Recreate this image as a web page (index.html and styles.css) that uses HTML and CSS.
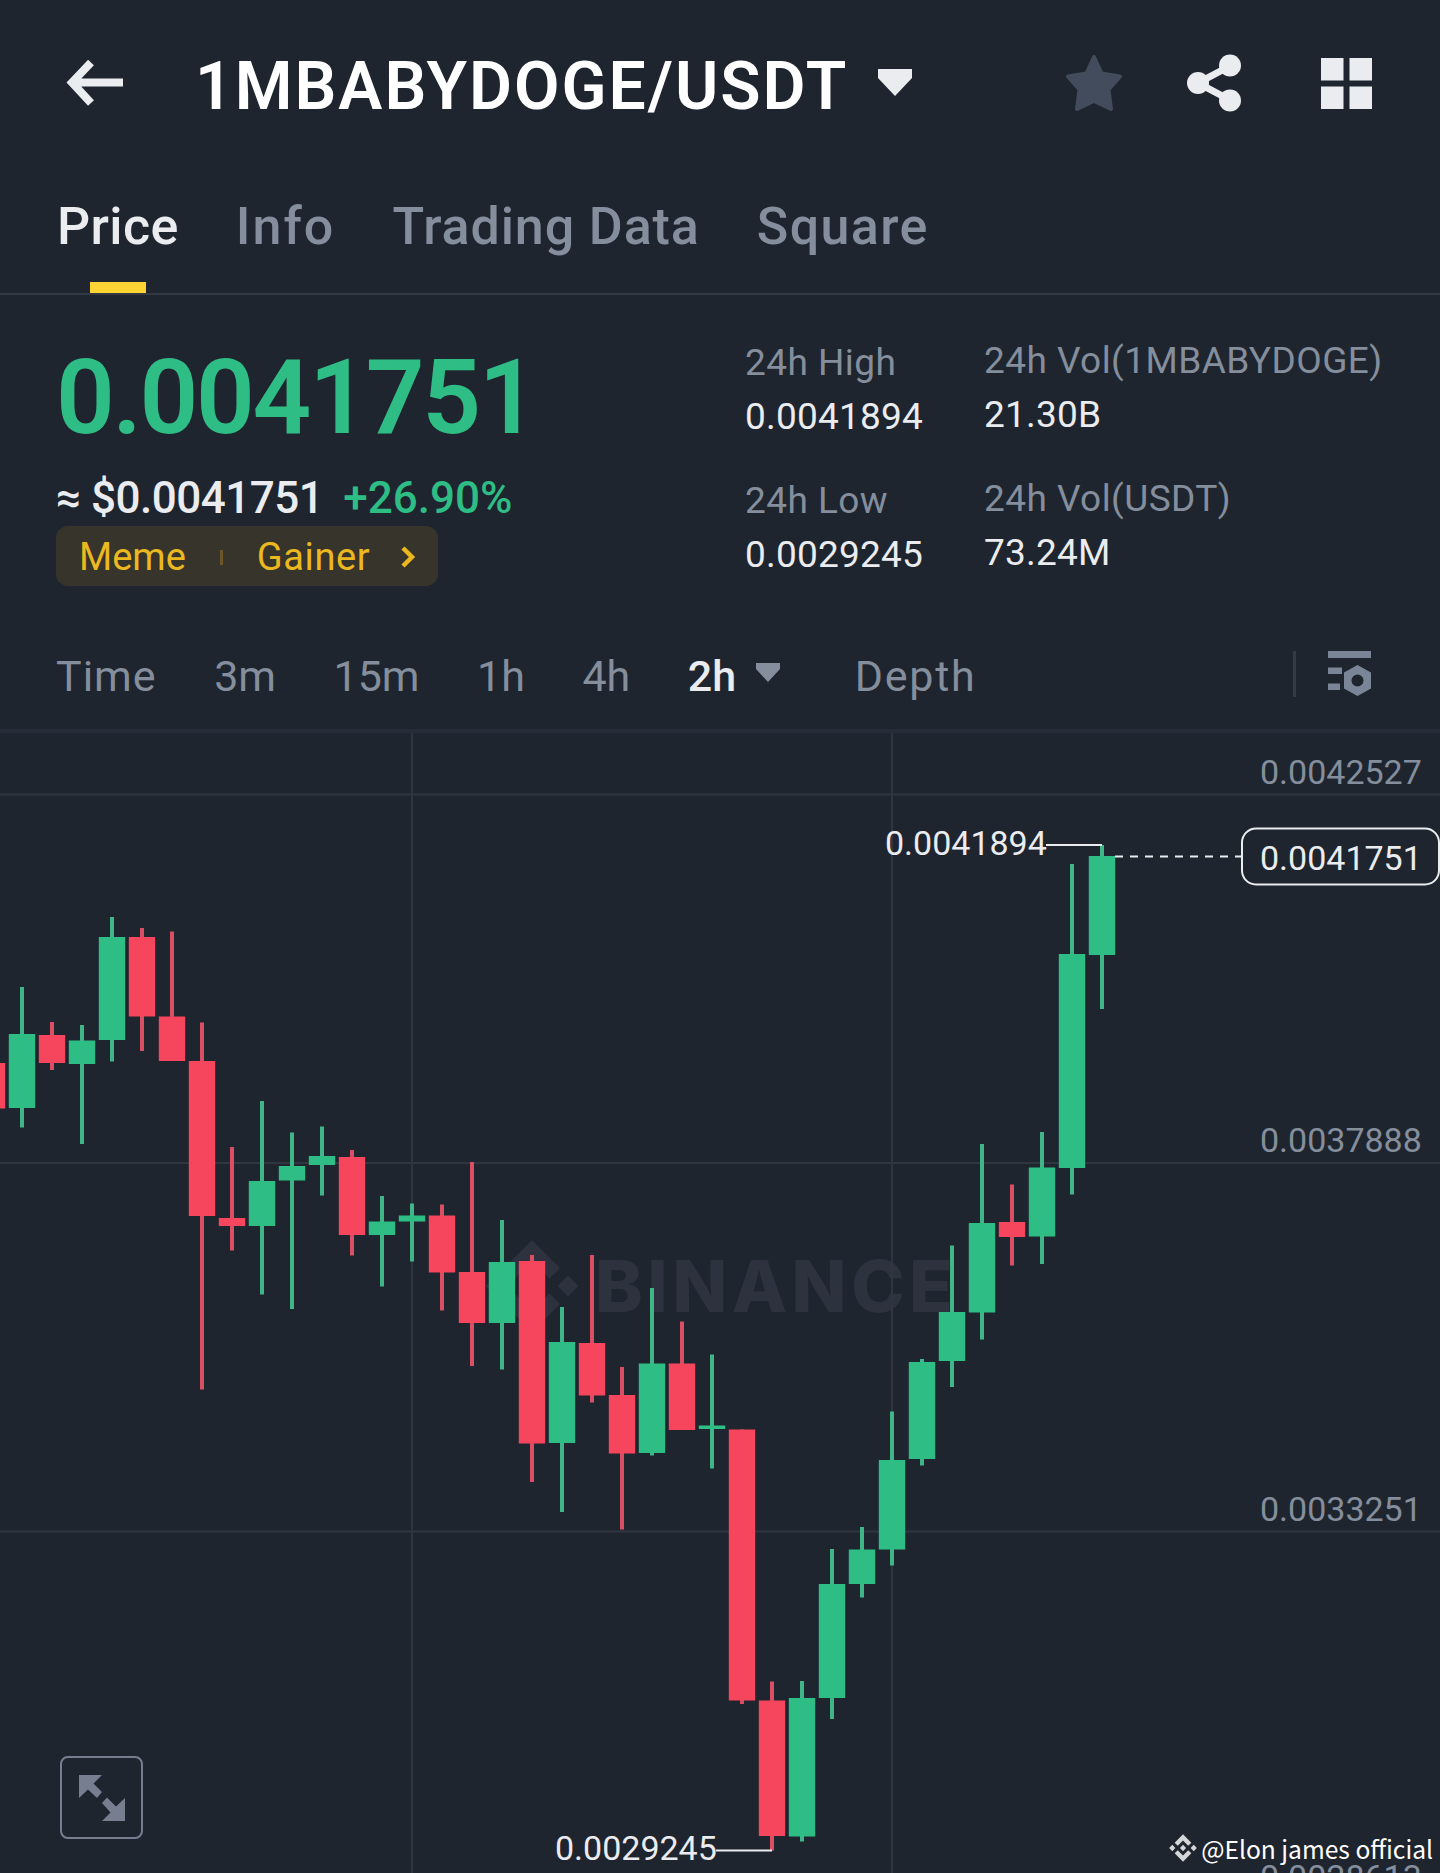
FILE: index.html
```
<!DOCTYPE html>
<html lang="en">
<head>
    <meta charset="UTF-8">
    <meta name="viewport" content="width=device-width, initial-scale=1.0">
    <title>1MBABYDOGE/USDT</title>
    <link rel="stylesheet" href="styles.css">
</head>
<body>
    <header class="header">
        <svg class="back" width="58" height="46" viewBox="0 0 58 46">
            <path d="M57 22.500H6M25 2.500L6 22.500L25 43" fill="none" stroke="currentColor" stroke-width="8"/>
        </svg>
        <h1 class="pair">1MBABYDOGE/USDT</h1>
        <svg class="pair-caret" width="34" height="28" viewBox="0 0 34 28">
            <path d="M0 0H34V9L17 27L0 9Z" fill="currentColor"/>
        </svg>
        <div class="actions">
            <svg class="star" width="58" height="58" viewBox="0 0 58 58">
                <path d="M29 3L36.500 19.500L55 22.500L43.500 35.500L46 55L29 47L12 55L14.500 35.500L3 22.500L21.500 19.500Z" fill="currentColor" stroke="currentColor" stroke-width="4" stroke-linejoin="round"/>
            </svg>
            <svg class="share" width="54" height="58" viewBox="0 0 54 58">
                <path d="M43 12L11 29L43 46" fill="none" stroke="currentColor" stroke-width="7"/>
                <circle cx="43" cy="11.500" r="11" fill="currentColor"/>
                <circle cx="11" cy="29" r="11" fill="currentColor"/>
                <circle cx="43" cy="46.500" r="11" fill="currentColor"/>
            </svg>
            <svg class="grid-icon" width="51" height="51" viewBox="0 0 51 51">
                <path d="M0 0H22.500V22.500H0ZM28.500 0H51V22.500H28.500ZM0 28.500H22.500V51H0ZM28.500 28.500H51V51H28.500Z" fill="currentColor"/>
            </svg>
        </div>
    </header>

    <nav class="tabs">
        <a class="tab active">Price</a>
        <a class="tab info">Info</a>
        <a class="tab">Trading Data</a>
        <a class="tab square">Square</a>
    </nav>

    <section class="summary">
        <div class="quote">
            <div class="price">0.0041751</div>
            <div class="fiat">
                <span class="approx">≈ $0.0041751</span>
                <span class="change">+26.90%</span>
            </div>
            <div class="tags">
                <span>Meme</span>
                <i class="tag-divider"></i>
                <span class="gainer">Gainer</span>
                <svg width="16" height="22" viewBox="0 0 16 22">
                    <path d="M3 2L12 11L3 20" fill="none" stroke="currentColor" stroke-width="4.500"/>
                </svg>
            </div>
        </div>
        <dl class="stats">
            <dt>24h High</dt>
            <dd>0.0041894</dd>
            <dt>24h Low</dt>
            <dd>0.0029245</dd>
        </dl>
        <dl class="stats volume">
            <dt>24h Vol(1MBABYDOGE)</dt>
            <dd>21.30B</dd>
            <dt>24h Vol(USDT)</dt>
            <dd>73.24M</dd>
        </dl>
    </section>

    <nav class="intervals">
        <a class="wide">Time</a>
        <a>3m</a>
        <a>15m</a>
        <a>1h</a>
        <a>4h</a>
        <a class="selected">2h
            <svg width="24" height="19" viewBox="0 0 24 19"><path d="M0 0H24V6L12 19L0 6Z" fill="currentColor"/></svg>
        </a>
        <a class="wide depth">Depth</a>
        <span class="settings">
            <svg width="44" height="46" viewBox="0 0 44 46">
                <path d="M0 0H43V7H0ZM0 16.500H14V23H0ZM0 32.500H12V39H0Z" fill="currentColor"/>
                <path fill-rule="evenodd" d="M29.500 14L43 21.500V37.500L29.500 45L16 37.500V21.500ZM29.500 23.500A6 6 0 1 0 29.500 35.500A6 6 0 1 0 29.500 23.500Z" fill="currentColor"/>
            </svg>
        </span>
    </nav>

    <main class="chart">
        <svg id="plot" class="plot" width="1440" height="1140" viewBox="0 733 1440 1140">
            <g class="watermark">
                <g transform="translate(532 1286)">
                    <path d="M0 -46L28 -18L17.500 -7.500L0 -25L-17.500 -7.500L-28 -18ZM0 46L28 18L17.500 7.500L0 25L-17.500 7.500L-28 18ZM36 -10.500L46.500 0L36 10.500L25.500 0ZM-36 -10.500L-46.500 0L-36 10.500L-25.500 0ZM0 -10.500L10.500 0L0 10.500L-10.500 0Z"/>
                </g>
                <text x="595" y="1312" textLength="358">BINANCE</text>
            </g>
            <path class="grid" d="M0 794.500H1440M0 1163H1440M0 1531.500H1440M412 733V1873M892 733V1873"/>
            <g id="candles"></g>
            <path class="marker" d="M1046 845H1102M716 1850.500H772"/>
            <path class="last-line" d="M1115 856.500H1241"/>
            <rect class="last-box" x="1242" y="828.500" width="197" height="56" rx="14"/>
            <g class="axis">
                <text x="1260" y="784">0.0042527</text>
                <text x="1260" y="1152">0.0037888</text>
                <text x="1260" y="1521">0.0033251</text>
                <text x="1260" y="1889">0.0028613</text>
            </g>
            <g class="axis bright">
                <text x="1260" y="870">0.0041751</text>
                <text x="885" y="855">0.0041894</text>
                <text x="555" y="1860">0.0029245</text>
            </g>
        </svg>
        <button class="expand">
            <svg width="46" height="46" viewBox="0 0 46 46">
                <path d="M0 0H23L14.500 8.500L23 17L18 23L9 14.500L0 23ZM46 46H23L31.500 37.500L23 28L28 22.500L37 31.500L46 23Z" fill="currentColor"/>
            </svg>
        </button>
        <div class="author">
            <svg width="28" height="28" viewBox="-47 -47 94 94">
                <path d="M0 -46L28 -18L17.500 -7.500L0 -25L-17.500 -7.500L-28 -18ZM0 46L28 18L17.500 7.500L0 25L-17.500 7.500L-28 18ZM36 -10.500L46.500 0L36 10.500L25.500 0ZM-36 -10.500L-46.500 0L-36 10.500L-25.500 0ZM0 -10.500L10.500 0L0 10.500L-10.500 0Z" fill="currentColor"/>
            </svg>
            <span>@Elon james official</span>
        </div>
    </main>

    <script>
        // [direction, high, body top, body bottom, low]
        const candles = [
            ['down', 1063, 1063, 1108.5, 1108.5],
            ['up', 987, 1034, 1108, 1127.5],
            ['down', 1022, 1035, 1063, 1070],
            ['up', 1025, 1040.5, 1064, 1144],
            ['up', 917, 937, 1040, 1061.5],
            ['down', 928, 937, 1016.5, 1051],
            ['down', 931.5, 1016.5, 1061, 1061],
            ['down', 1022.5, 1061, 1216, 1389.5],
            ['down', 1147, 1218, 1226, 1250.5],
            ['up', 1101, 1181, 1226, 1294.5],
            ['up', 1132.5, 1166, 1180.5, 1309],
            ['up', 1126.5, 1156, 1165, 1195.5],
            ['down', 1150, 1157, 1235, 1255.5],
            ['up', 1196, 1221.5, 1235, 1286.5],
            ['up', 1203.5, 1215.5, 1221.5, 1261.5],
            ['down', 1204.5, 1215.5, 1272.5, 1310.5],
            ['down', 1162, 1272, 1323, 1366],
            ['up', 1220, 1262, 1323, 1369.5],
            ['down', 1255, 1261, 1443.5, 1482],
            ['up', 1307, 1342, 1443, 1512],
            ['down', 1255, 1343, 1395.5, 1402.5],
            ['down', 1367, 1395, 1453.5, 1529.5],
            ['up', 1288, 1363.5, 1453, 1455.5],
            ['down', 1321.5, 1363.5, 1430, 1430],
            ['up', 1354.5, 1425.5, 1429, 1468.5],
            ['down', 1429.5, 1429.5, 1700.5, 1704],
            ['down', 1681.5, 1700.5, 1836, 1850.5],
            ['up', 1681, 1698, 1836.5, 1841.5],
            ['up', 1549, 1584, 1698, 1719],
            ['up', 1527, 1549.5, 1584, 1597.5],
            ['up', 1411.5, 1460, 1549.5, 1565.5],
            ['up', 1359, 1362, 1459, 1465.5],
            ['up', 1245.5, 1312, 1361, 1387],
            ['up', 1144, 1223, 1312.5, 1339.5],
            ['down', 1184.5, 1222, 1237, 1265.5],
            ['up', 1132, 1167.5, 1236.5, 1264],
            ['up', 864, 954, 1168, 1194.5],
            ['up', 845, 856, 955, 1009]
        ];

        const group = document.getElementById('candles');

        function addRect(className, x, y, width, height) {
            const rect = document.createElementNS('http://www.w3.org/2000/svg', 'rect');
            rect.setAttribute('class', className);
            rect.setAttribute('x', x);
            rect.setAttribute('y', y);
            rect.setAttribute('width', width);
            rect.setAttribute('height', height);
            group.appendChild(rect);
        }

        candles.forEach(function(candle, i) {
            const [dir, high, top, bottom, low] = candle;
            const x = -8 + i * 30;
            addRect('wick ' + dir, x - 2, high, 4, low - high);
            addRect('body ' + dir, x - 13.2, top, 26.4, bottom - top);
        });
    </script>
</body>
</html>
```
FILE: styles.css
```
* {
    box-sizing: border-box;
}
body {
    margin: 0;
    width: 1440px;
    height: 1873px;
    overflow: hidden;
    background-color: #1f252f;
    color: #eaecef;
    font-family: Roboto, "Liberation Sans", sans-serif;
}
svg {
    display: block;
    flex: none;
}

/* header */
.header {
    display: flex;
    align-items: center;
    height: 166px;
    padding: 0 68px 0 66px;
    color: #eaecef;
}
.pair {
    margin: 0 0 0 71px;
    padding-top: 7px;
    width: 657px;
    font-size: 66px;
    font-weight: 650;
    letter-spacing: 2px;
    white-space: nowrap;
    color: #fff;
}
.pair-caret {
    margin-left: 26px;
}
.actions {
    display: flex;
    align-items: center;
    margin-left: auto;
}
.star {
    color: #434c5c;
}
.share {
    margin-left: 64px;
}
.grid-icon {
    margin-left: 80px;
}

/* tabs */
.tabs {
    display: flex;
    gap: 57px;
    height: 129px;
    padding-left: 57px;
    border-bottom: 2px solid #333943;
}
.tab {
    position: relative;
    height: 127px;
    line-height: 121px;
    font-size: 52px;
    font-weight: 500;
    letter-spacing: 0.9px;
    color: #848e9c;
}
.tab.info {
    letter-spacing: 2px;
}
.tab.square {
    letter-spacing: 1.4px;
}
.tab.active {
    letter-spacing: 0.4px;
    color: #eaecef;
}
.tab.active::after {
    content: "";
    position: absolute;
    left: 50%;
    bottom: 0;
    width: 56px;
    height: 11px;
    margin-left: -28px;
    background-color: #fcd535;
}

/* summary */
.summary {
    display: grid;
    grid-template-columns: 689px 239px auto;
    height: 329px;
    padding: 41px 0 0 56px;
}
.price {
    margin-top: 4px;
    line-height: 116px;
    font-size: 103px;
    font-weight: 600;
    letter-spacing: -2.3px;
    color: #2ebd85;
}
.fiat {
    display: flex;
    gap: 20px;
    margin-top: 14px;
    line-height: 57px;
    height: 56px;
    font-size: 44px;
    font-weight: 500;
}
.approx {
    letter-spacing: -0.5px;
}
.change {
    color: #2ebd85;
}
.tags {
    display: flex;
    align-items: center;
    width: 382px;
    height: 60px;
    padding: 2px 22px 0 23px;
    border-radius: 12px;
    background-color: #36342b;
    color: #ecb81f;
    font-size: 38px;
}
.tag-divider {
    width: 3px;
    height: 15px;
    margin: 0 34px;
    background-color: #6b5726;
}
.gainer {
    letter-spacing: 0.6px;
}
.tags svg {
    margin-left: auto;
}
.stats {
    margin: 0;
    font-size: 37px;
    line-height: 54px;
    white-space: nowrap;
}
.stats dt {
    letter-spacing: 0.45px;
    color: #848e9c;
}
.stats dd {
    margin: 0 0 30px;
    letter-spacing: 0.2px;
}
.volume {
    margin-top: -2px;
}

/* intervals */
.intervals {
    display: flex;
    align-items: center;
    gap: 57.5px;
    height: 109px;
    padding: 0 68px 2px 56px;
    border-bottom: 4px solid #272d38;
    font-size: 43px;
    color: #848e9c;
}
.wide {
    letter-spacing: 1px;
}
.intervals .selected {
    display: flex;
    align-items: center;
    gap: 20px;
    font-weight: 500;
    color: #eaecef;
}
.selected svg {
    margin-top: -6px;
    color: #848e9c;
}
.depth {
    margin-left: 17px;
    letter-spacing: 1.8px;
}
.settings {
    margin-left: auto;
    margin-top: -4px;
    padding-left: 32px;
    border-left: 3px solid #333a46;
    color: #7b8598;
}

/* chart */
.chart {
    position: relative;
    height: 1140px;
}
.grid {
    fill: none;
    stroke: #303640;
    stroke-width: 2;
}
.watermark {
    fill: #2d323e;
    font-family: Inter, sans-serif;
    font-size: 72px;
    font-weight: 800;
}
.body.up {
    fill: #2ebd85;
}
.body.down {
    fill: #f6465d;
}
.wick.up {
    fill: #40b587;
}
.wick.down {
    fill: #d94f64;
}
.marker {
    stroke: #eaecef;
    stroke-width: 2;
}
.last-line {
    stroke: #eaecef;
    stroke-width: 2;
    stroke-dasharray: 8 7;
}
.last-box {
    fill: #1f252f;
    stroke: #eaecef;
    stroke-width: 2;
}
.axis {
    font-size: 34px;
    fill: #848e9c;
}
.axis.bright {
    fill: #eaecef;
}
.expand {
    position: absolute;
    left: 60px;
    top: 1023px;
    display: flex;
    align-items: center;
    justify-content: center;
    width: 83px;
    height: 83px;
    padding: 0;
    border: 2px solid #767e8f;
    border-radius: 8px;
    background: none;
    color: #767e8f;
}
.author {
    position: absolute;
    right: 7px;
    bottom: 8px;
    display: flex;
    align-items: center;
    gap: 4px;
    line-height: 34px;
    font-family: "Noto Sans CJK SC", sans-serif;
    font-size: 24.6px;
    color: #fff;
}
.author svg {
    color: #d5d6d9;
}
```
